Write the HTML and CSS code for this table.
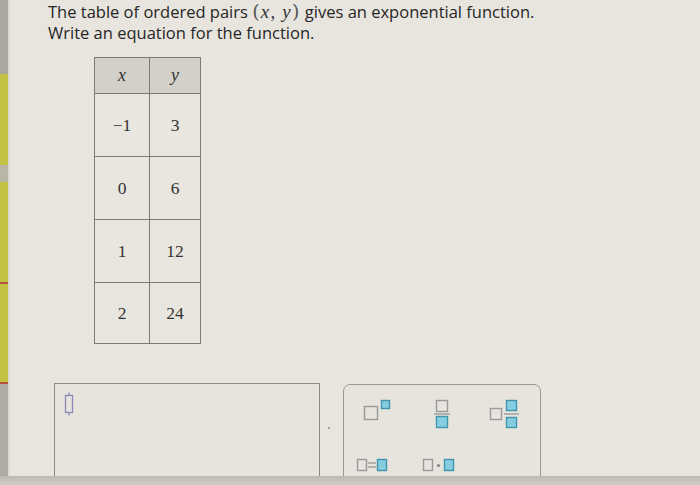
FILE: index.html
```html
<!DOCTYPE html>
<html>
<head>
<meta charset="utf-8">
<link rel="stylesheet" href="styles.css">
</head>
<body>
<div class="screen">
  <div class="strip">
    <div class="seg grey-top"></div>
    <div class="seg lime h92"></div>
    <div class="seg grey-mid"></div>
    <div class="seg lime h100"></div>
    <div class="seg red"></div>
    <div class="seg lime h98"></div>
    <div class="seg red"></div>
    <div class="seg grey-bottom"></div>
  </div>
  <div class="edge"></div>
  <main class="content">
    <p class="question">The table of ordered pairs <span class="math"><span class="paren">(</span><i>x</i>, <i>y</i><span class="paren">)</span></span> gives an exponential function.<br>Write an equation for the function.</p>
    <table class="pairs">
      <thead>
        <tr><th><i>x</i></th><th><i>y</i></th></tr>
      </thead>
      <tbody>
        <tr><td>−1</td><td>3</td></tr>
        <tr><td>0</td><td>6</td></tr>
        <tr><td>1</td><td>12</td></tr>
        <tr class="last"><td>2</td><td>24</td></tr>
      </tbody>
    </table>
    <div class="answer-row">
      <div class="answer-box">
        <svg class="cursor" width="12" height="24" viewBox="0 0 12 24">
          <rect x="2.5" y="3.5" width="7" height="17" fill="none" stroke="#8c86b8" stroke-width="1.3"/>
          <line x1="6" y1="0.5" x2="6" y2="3.5" stroke="#8c86b8" stroke-width="1.3"/>
          <line x1="6" y1="20.5" x2="6" y2="23.5" stroke="#8c86b8" stroke-width="1.3"/>
        </svg>
      </div>
      <span class="dot"></span>
      <div class="toolbar">
        <div class="tool-row top">
          <svg class="tool sup" width="30" height="22" viewBox="0 0 30 22">
            <rect x="1.5" y="7.5" width="13" height="13" fill="none" stroke="#9a9a9a" stroke-width="1.4"/>
            <rect x="18.5" y="1.5" width="8" height="8" fill="#86cde0" stroke="#3f95ad" stroke-width="1.4"/>
          </svg>
          <svg class="tool frac" width="18" height="30" viewBox="0 0 18 30">
            <rect x="3.5" y="1.5" width="11" height="11" fill="none" stroke="#9a9a9a" stroke-width="1.4"/>
            <line x1="1" y1="15" x2="17" y2="15" stroke="#9a9a9a" stroke-width="1.4"/>
            <rect x="3.5" y="17.5" width="11" height="11" fill="#86cde0" stroke="#3f95ad" stroke-width="1.4"/>
          </svg>
          <svg class="tool mixed" width="32" height="30" viewBox="0 0 32 30">
            <rect x="1.5" y="9.5" width="11" height="11" fill="none" stroke="#9a9a9a" stroke-width="1.4"/>
            <rect x="17.5" y="1.5" width="10" height="10" fill="#86cde0" stroke="#3f95ad" stroke-width="1.4"/>
            <line x1="15" y1="15" x2="30" y2="15" stroke="#9a9a9a" stroke-width="1.4"/>
            <rect x="17.5" y="18.5" width="10" height="10" fill="#86cde0" stroke="#3f95ad" stroke-width="1.4"/>
          </svg>
        </div>
        <div class="tool-row bottom">
          <svg class="tool eq" width="32" height="14" viewBox="0 0 32 14">
            <rect x="1.5" y="1.5" width="9" height="11" fill="none" stroke="#9a9a9a" stroke-width="1.4"/>
            <line x1="12" y1="5" x2="20" y2="5" stroke="#9a9a9a" stroke-width="1.4"/>
            <line x1="12" y1="9" x2="20" y2="9" stroke="#9a9a9a" stroke-width="1.4"/>
            <rect x="21.5" y="1.5" width="9" height="11" fill="#86cde0" stroke="#3f95ad" stroke-width="1.4"/>
          </svg>
          <svg class="tool dotop" width="34" height="14" viewBox="0 0 34 14">
            <rect x="1.5" y="1.5" width="9" height="11" fill="none" stroke="#9a9a9a" stroke-width="1.4"/>
            <circle cx="16.5" cy="7.5" r="1.6" fill="#888"/>
            <rect x="22.5" y="1.5" width="9" height="11" fill="#86cde0" stroke="#3f95ad" stroke-width="1.4"/>
          </svg>
        </div>
      </div>
    </div>
  </main>
</div>
<div class="bottom-bar"></div>
</body>
</html>
```

FILE: styles.css
```css
html, body {
  margin: 0;
  padding: 0;
  background: #e8e5de;
  width: 700px;
  height: 485px;
  overflow: hidden;
}

.screen {
  display: flex;
  height: 476px;
  overflow: hidden;
}

.strip {
  width: 8px;
  flex: none;
  display: flex;
  flex-direction: column;
}

.seg { flex: none; }
.grey-top { height: 74px; background: #aaa79f; }
.lime { background: #c4c244; }
.h92 { height: 91px; }
.grey-mid { height: 17px; background: #b9b6a6; }
.h100 { height: 100px; }
.red { height: 2px; background: #b5523a; }
.h98 { height: 98px; }
.grey-bottom { flex: 1; background: #aeaba3; }

.edge {
  width: 2px;
  flex: none;
  background: #dcd9d1;
}

.content {
  flex: 1;
  padding-left: 38px;
}

.question {
  margin: 1px 0 0 0;
  font-family: "Open Sans", sans-serif;
  font-size: 16.5px;
  line-height: 21px;
  color: #262626;
}

.math {
  font-family: "Liberation Serif", serif;
  font-size: 19px;
  letter-spacing: 1.2px;
  color: #333;
}

.math .paren {
  font-family: "DejaVu Serif", serif;
  font-size: 19px;
  color: #555;
}

.pairs {
  border-collapse: collapse;
  margin: 14px 0 0 46px;
  font-family: "Liberation Serif", serif;
  font-size: 17.5px;
  color: #333;
}

.pairs th, .pairs td {
  border: 1.5px solid #7b7b78;
  text-align: center;
  padding: 0;
}

.pairs th {
  background: #d3d0c9;
  height: 35px;
  font-weight: normal;
  font-size: 18px;
}

.pairs th:first-child, .pairs td:first-child { width: 54px; }
.pairs th:last-child, .pairs td:last-child { width: 50px; }

.pairs td {
  height: 62px;
  background: #e9e6df;
}

.pairs tr.last td { height: 60px; }

.answer-row {
  display: flex;
  align-items: flex-start;
  margin-top: 39px;
  margin-left: 6px;
}

.answer-box {
  width: 266px;
  height: 110px;
  border: 1px solid #8c8b87;
  background: #e7e4dd;
  padding: 8px 0 0 8px;
  box-sizing: border-box;
  flex: none;
}

.cursor { display: block; }

.dot {
  width: 2px;
  height: 2px;
  border-radius: 50%;
  background: #888;
  margin: 44px 0 0 8px;
  flex: none;
}

.toolbar {
  margin-left: 13px;
  margin-top: 1px;
  width: 198px;
  height: 110px;
  border: 1px solid #9a9994;
  border-radius: 7px 7px 0 0;
  box-sizing: border-box;
  background: #e7e4dd;
  flex: none;
}

.tool { display: block; }

.tool-row {
  display: flex;
  align-items: flex-start;
}

.tool-row.top {
  padding: 14px 0 0 19px;
  height: 44px;
}

.frac { margin-left: 40px; }
.mixed { margin-left: 38px; }

.tool-row.bottom {
  padding: 15px 0 0 12px;
}

.dotop { margin-left: 34px; }

.bottom-bar {
  height: 9px;
  background: linear-gradient(#bdbab3, #cfccc5);
}
```
